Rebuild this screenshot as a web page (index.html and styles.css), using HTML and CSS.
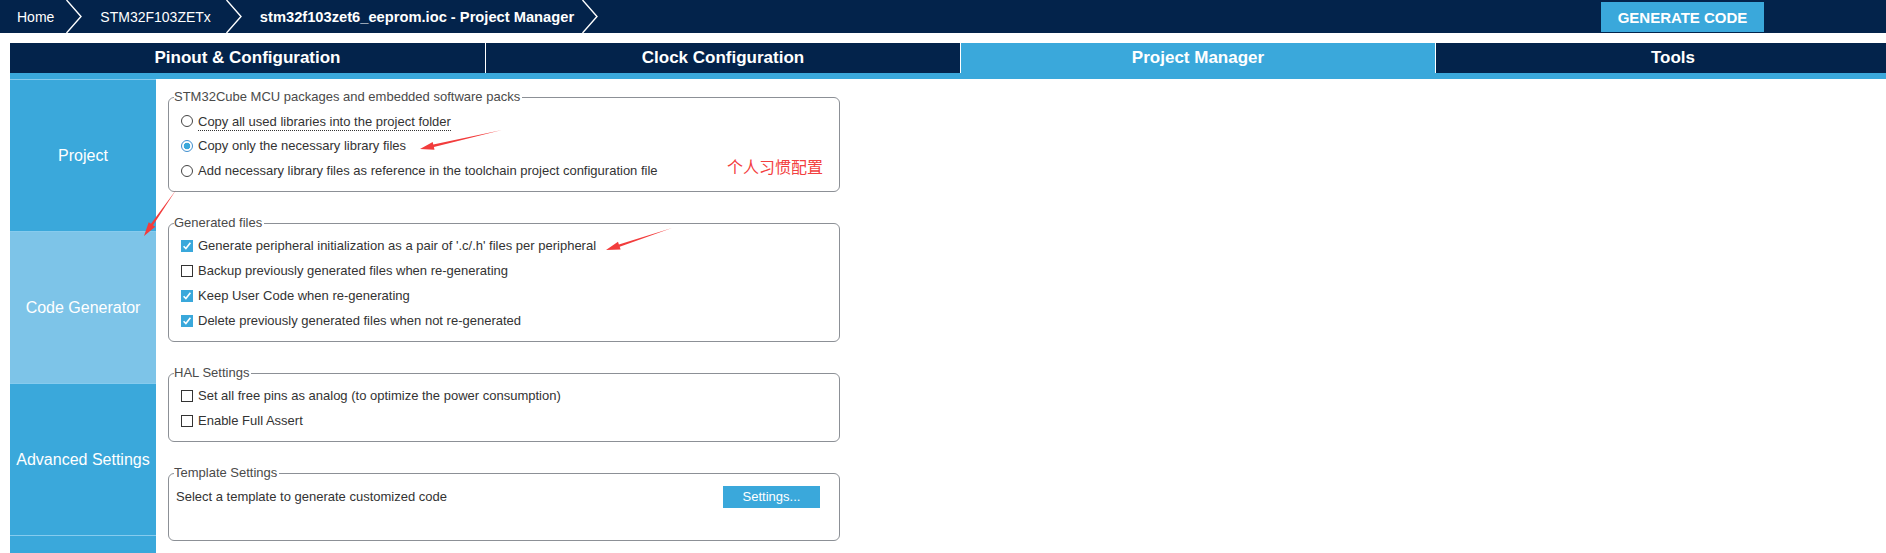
FILE: index.html
```html
<!DOCTYPE html>
<html lang="en">
<head>
  <meta charset="UTF-8" />
  <title>STM32CubeMX - Project Manager</title>
  <link rel="stylesheet" href="styles.css">
</head>
<body>
  <header class="topbar">
    <nav class="crumbs">
      <span class="crumb first">Home</span>
      <svg class="chev" width="16" height="33" viewBox="0 0 16 33"><polyline points="0.5,0 15,16.5 0.5,33" /></svg>
      <span class="crumb">STM32F103ZETx</span>
      <svg class="chev" width="16" height="33" viewBox="0 0 16 33"><polyline points="0.5,0 15,16.5 0.5,33" /></svg>
      <span class="crumb current">stm32f103zet6_eeprom.ioc - Project Manager</span>
      <svg class="chev" width="16" height="33" viewBox="0 0 16 33"><polyline points="0.5,0 15,16.5 0.5,33" /></svg>
    </nav>
    <button class="gen-btn">GENERATE CODE</button>
  </header>

  <div class="tabs">
    <div class="tab">Pinout &amp; Configuration</div>
    <div class="tab">Clock Configuration</div>
    <div class="tab active">Project Manager</div>
    <div class="tab">Tools</div>
  </div>

  <div class="main">
    <aside class="side">
      <div class="side-item">Project</div>
      <div class="side-item active">Code Generator</div>
      <div class="side-item">Advanced Settings</div>
      <div class="side-item rest"></div>
    </aside>

    <section class="content">
      <fieldset class="group packs">
        <legend>STM32Cube MCU packages and embedded software packs</legend>
        <label class="opt"><span class="radio"></span><span class="focus">Copy all used libraries into the project folder</span></label>
        <label class="opt"><span class="radio on"></span>Copy only the necessary library files</label>
        <label class="opt"><span class="radio"></span>Add necessary library files as reference in the toolchain project configuration file</label>
      </fieldset>

      <fieldset class="group">
        <legend>Generated files</legend>
        <label class="opt"><span class="box on"><svg width="12" height="12" viewBox="0 0 12 12"><polyline points="2.6,6.2 4.9,8.6 9.4,2.8" /></svg></span>Generate peripheral initialization as a pair of '.c/.h' files per peripheral</label>
        <label class="opt"><span class="box"></span>Backup previously generated files when re-generating</label>
        <label class="opt"><span class="box on"><svg width="12" height="12" viewBox="0 0 12 12"><polyline points="2.6,6.2 4.9,8.6 9.4,2.8" /></svg></span>Keep User Code when re-generating</label>
        <label class="opt"><span class="box on"><svg width="12" height="12" viewBox="0 0 12 12"><polyline points="2.6,6.2 4.9,8.6 9.4,2.8" /></svg></span>Delete previously generated files when not re-generated</label>
      </fieldset>

      <fieldset class="group">
        <legend>HAL Settings</legend>
        <label class="opt"><span class="box"></span>Set all free pins as analog (to optimize the power consumption)</label>
        <label class="opt"><span class="box"></span>Enable Full Assert</label>
      </fieldset>

      <fieldset class="group template">
        <legend>Template Settings</legend>
        <div class="tpl-row">
          <span class="tpl-text">Select a template to generate customized code</span>
          <button class="btn">Settings...</button>
        </div>
      </fieldset>
    </section>
  </div>

  <!-- red hand-drawn notes on top of the screenshot -->
  <svg class="marks" width="1886" height="553" viewBox="0 0 1886 553">
    <polygon points="502,130 433.3,144.6 432.7,141.9 420,149 434.5,149.7 433.9,147" />
    <polygon points="672,228 618.9,244.5 618,241.8 606,250 620.6,249.4 619.7,246.7" />
    <polygon points="176,190 151,223.8 148.7,222.2 144,236 155.3,226.8 153,225.2" />
  </svg>
  <div class="note">个人习惯配置</div>
</body>
</html>
```

FILE: styles.css
```css
:root {
  --navy: #03234b;
  --blue: #3aa8db;
  --blue-light: #7dc4e8;
  --line: #8c9096;
}

body {
  margin: 0;
  width: 1886px;
  height: 553px;
  overflow: hidden;
  position: relative;
  background: #fff;
  font-family: "Liberation Sans", Arial, sans-serif;
}

.topbar {
  display: flex;
  height: 33px;
  background: var(--navy);
  color: #fff;
}

.crumbs {
  display: flex;
  align-items: center;
  font-size: 14px;
}

.crumb {
  padding: 0 15px 0 18px;
}

.crumb.first {
  padding: 0 12px 0 17px;
}

.crumb.current {
  font-weight: bold;
  font-size: 14.7px;
  padding: 0 8px 0 18px;
}

.chev {
  display: block;
}

.chev polyline {
  fill: none;
  stroke: #fff;
  stroke-width: 1.4;
}

.gen-btn {
  margin: 2px 122px 0 auto;
  width: 163px;
  height: 30px;
  border: none;
  background: var(--blue);
  color: #fff;
  font-family: inherit;
  font-size: 15px;
  font-weight: bold;
}

.tabs {
  display: flex;
  margin: 10px 0 0 10px;
  border-bottom: 6px solid var(--blue);
  overflow: hidden;
}

.tab {
  flex: 0 0 475px;
  box-sizing: border-box;
  height: 30px;
  line-height: 30px;
  text-align: center;
  background: var(--navy);
  color: #fff;
  font-size: 17px;
  font-weight: bold;
}

.tab + .tab {
  border-left: 1px solid #fff;
}

.tab.active {
  background: var(--blue);
}

.main {
  display: flex;
  gap: 12px;
  margin-left: 10px;
}

.side {
  flex: none;
  width: 146px;
  background: var(--blue);
}

.side-item {
  height: 152px;
  box-sizing: border-box;
  border-top: 1px solid #86cbee;
  display: flex;
  align-items: center;
  justify-content: center;
  color: #fff;
  font-size: 16px;
}

.side-item.active {
  background: var(--blue-light);
}

.side-item.rest {
  height: 18px;
}

.content {
  width: 672px;
  padding-top: 11px;
}

.group {
  margin: 0 0 24px;
  padding: 3px 10px 8px;
  border: 1px solid var(--line);
  border-radius: 6px;
  min-width: 0;
}

.group:last-child {
  margin-bottom: 0;
}

.group legend {
  margin-left: -5px;
  padding: 0 2px 0 0;
  font-size: 13px;
  line-height: 14px;
  color: #4a4a4a;
}

.group.packs {
  padding-top: 4px;
}

.opt {
  display: flex;
  align-items: center;
  gap: 5px;
  height: 25px;
  font-size: 13px;
  color: #333;
}

.box,
.radio {
  flex: none;
  width: 12px;
  height: 12px;
  box-sizing: border-box;
  margin-left: 2px;
  background: #fff;
}

.box {
  border: 1px solid #333;
}

.box.on {
  border-color: var(--blue);
  background: var(--blue);
}

.box svg {
  display: block;
  margin: -1px;
}

.box polyline {
  fill: none;
  stroke: #fff;
  stroke-width: 1.6;
}

.radio {
  border: 1px solid #444;
  border-radius: 50%;
}

.radio.on {
  border-color: #3f8fcf;
  background: radial-gradient(circle, var(--blue) 0 3px, #fff 3.6px);
}

.focus {
  border-bottom: 1px dotted #333;
  padding-bottom: 1px;
  margin-top: 3px;
}

.group.template {
  padding-top: 4px;
  padding-bottom: 31px;
}

.tpl-row {
  display: flex;
  align-items: center;
  justify-content: space-between;
  height: 25px;
}

.tpl-text {
  margin-left: -3px;
  font-size: 13px;
  color: #333;
}

.btn {
  width: 97px;
  height: 22px;
  margin-right: 9px;
  border: none;
  background: var(--blue);
  color: #fff;
  font-family: inherit;
  font-size: 13px;
}

.marks {
  position: absolute;
  top: 0;
  left: 0;
  pointer-events: none;
}

.marks polygon {
  fill: #f23c3c;
}

.note {
  position: absolute;
  left: 727px;
  top: 156px;
  font-family: "Noto Sans CJK SC", sans-serif;
  font-size: 16px;
  line-height: 20px;
  color: #f34040;
}
```
